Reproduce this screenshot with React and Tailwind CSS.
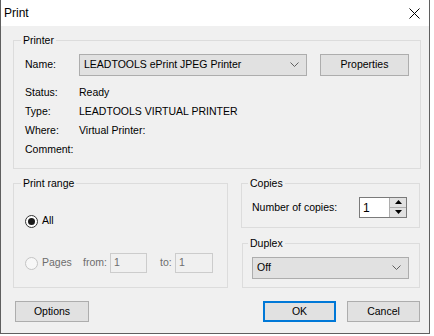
import { useState } from "react";

const font = { fontFamily: '"Liberation Sans", Arial, sans-serif' };

function Chevron() {
  return (
    <svg width="9" height="6" viewBox="0 0 9 6" className="shrink-0">
      <path d="M0.5 0.5 L4.5 4.5 L8.5 0.5" fill="none" stroke="#606060" strokeWidth="1" />
    </svg>
  );
}

function Combo({ value, className }) {
  return (
    <div
      className={`h-[22px] flex items-center justify-between pl-[4px] pr-[7px] bg-[#e1e1e1] border border-[#adadad] text-black ${className}`}
    >
      <span>{value}</span>
      <Chevron />
    </div>
  );
}

function Btn({ children, className = "", primary = false }) {
  return (
    <button
      className={`h-[21px] bg-[#e1e1e1] flex items-center justify-center text-black ${
        primary ? "border-2 border-[#0078d7]" : "border border-[#adadad]"
      } ${className}`}
    >
      {children}
    </button>
  );
}

// legend sits inside the fieldset's padding, so pull it back left
function Group({ title, className = "", children }) {
  return (
    <fieldset className={`border border-[#dcdcdc] ${className}`}>
      <legend className="-ml-[4px] px-[2px] leading-[14px] text-black">{title}</legend>
      {children}
    </fieldset>
  );
}

export default function App() {
  const [range, setRange] = useState("all");
  const [copies, setCopies] = useState(1);

  const info = [
    ["Status:", "Ready"],
    ["Type:", "LEADTOOLS VIRTUAL PRINTER"],
    ["Where:", "Virtual Printer:"],
    ["Comment:", ""],
  ];

  return (
    <div className="w-[434px] h-[336px] bg-white text-[10.5px]" style={font}>
      <div className="w-[430px] h-[334px] border border-[#5f5f5f] border-t-0 bg-[#f0f0f0] flex flex-col">
        {/* title bar */}
        <div className="h-[26px] bg-white flex items-center justify-between pl-[3px] pr-[9px]">
          <span className="text-[12px] text-black">Print</span>
          <svg width="11" height="11" viewBox="0 0 11 11">
            <path d="M0.5 0.5 L10.5 10.5 M10.5 0.5 L0.5 10.5" stroke="#000" strokeWidth="1" />
          </svg>
        </div>

        <div className="flex flex-col pl-[12px] pr-[9px] pt-[7px]">
          <Group title="Printer" className="pl-[11px] pr-[11px] pt-[7px] pb-[9px]">
            <div className="flex items-center h-[22px]">
              <span className="w-[54px]">Name:</span>
              <Combo value="LEADTOOLS ePrint JPEG Printer" className="w-[228px]" />
              <Btn className="ml-[13px] w-[89px] h-[22px]">Properties</Btn>
            </div>
            <div className="mt-[7px] flex flex-col">
              {info.map(([k, v]) => (
                <div key={k} className="flex items-center h-[19px]">
                  <span className="w-[54px]">{k}</span>
                  <span>{v}</span>
                </div>
              ))}
            </div>
          </Group>

          <div className="flex mt-[7px] gap-[13px]">
            <Group title="Print range" className="w-[216px] h-[112px] pl-[11px] pr-[8px]">
              <div className="flex flex-col">
                <label className="flex items-center h-[20px] mt-[21px] cursor-default" onClick={() => setRange("all")}>
                  <span className="w-[13px] h-[13px] rounded-full border border-[#333] bg-white flex items-center justify-center">
                    {range === "all" && <span className="w-[7px] h-[7px] rounded-full bg-[#1a1a1a]" />}
                  </span>
                  <span className="ml-[4px]">All</span>
                </label>
                <div className="flex items-center h-[20px] mt-[22px] text-[#6d6d6d]">
                  <span className="w-[13px] h-[13px] rounded-full border border-[#c4c4c4] bg-[#f7f7f7]" />
                  <span className="ml-[4px] w-[41px]">Pages</span>
                  <span className="w-[27px]">from:</span>
                  <span className="w-[37px] h-[20px] border border-[#cccccc] flex items-center pl-[3px]">1</span>
                  <span className="ml-[13px] w-[15px]">to:</span>
                  <span className="w-[38px] h-[20px] border border-[#cccccc] flex items-center pl-[3px]">1</span>
                </div>
              </div>
            </Group>

            <div className="flex flex-col w-[179px]">
              <Group title="Copies" className="h-[52px] pl-[10px] pr-[12px]">
                <div className="flex items-center justify-between mt-[7px] h-[21px]">
                  <span>Number of copies:</span>
                  <div className="flex h-[21px] w-[48px] border border-[#7a7a7a] bg-white">
                    <input
                      value={copies}
                      onChange={(e) => setCopies(e.target.value)}
                      className="w-[29px] pl-[3px] text-[12px] outline-none bg-white"
                    />
                    <div className="flex flex-col w-[17px] border-l border-[#adadad] bg-[#e1e1e1]">
                      <div className="h-1/2 flex items-center justify-center border-b border-[#adadad]">
                        <svg width="7" height="4" viewBox="0 0 7 4"><path d="M3.5 0 L7 4 L0 4 Z" fill="#000" /></svg>
                      </div>
                      <div className="h-1/2 flex items-center justify-center">
                        <svg width="7" height="4" viewBox="0 0 7 4"><path d="M0 0 L7 0 L3.5 4 Z" fill="#000" /></svg>
                      </div>
                    </div>
                  </div>
                </div>
              </Group>
              <Group title="Duplex" className="mt-[8px] h-[52px] pl-[9px] pr-[10px] ml-[1px] mr-[1px]">
                <Combo value="Off" className="mt-[7px] w-[157px]" />
              </Group>
            </div>
          </div>

          <div className="flex items-center mt-[13px] pl-[2px]">
            <Btn className="w-[74px]">Options</Btn>
            <Btn primary className="ml-auto w-[73px]">OK</Btn>
            <Btn className="ml-[11px] w-[73px]">Cancel</Btn>
          </div>
        </div>
      </div>
    </div>
  );
}
